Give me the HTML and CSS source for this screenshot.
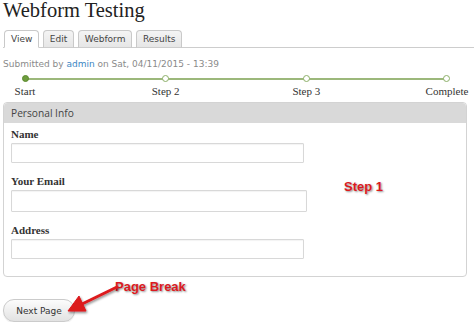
FILE: index.html
```html
<!DOCTYPE html>
<html lang="en">
<head>
    <meta charset="UTF-8">
    <meta name="viewport" content="width=device-width, initial-scale=1.0">
    <title>Webform Testing</title>
    <link rel="stylesheet" href="styles.css">
</head>
<body>
    <div class="page">
        <h1 class="page-title">Webform Testing</h1>

        <ul class="tabs">
            <li class="active"><a href="#">View</a></li>
            <li><a href="#">Edit</a></li>
            <li><a href="#">Webform</a></li>
            <li><a href="#">Results</a></li>
        </ul>

        <div class="submitted">Submitted by <a href="#">admin</a> on Sat, 04/11/2015 - 13:39</div>

        <div class="progress">
            <div class="step done"><span class="dot"></span><span class="step-label">Start</span></div>
            <div class="step"><span class="dot"></span><span class="step-label">Step 2</span></div>
            <div class="step"><span class="dot"></span><span class="step-label">Step 3</span></div>
            <div class="step"><span class="dot"></span><span class="step-label">Complete</span></div>
        </div>

        <form class="webform" onsubmit="event.preventDefault();">
            <fieldset>
                <legend>Personal Info</legend>
                <div class="fields">
                    <label class="form-item">
                        <span>Name</span>
                        <input type="text" name="name" class="short">
                    </label>
                    <label class="form-item">
                        <span>Your Email</span>
                        <input type="text" name="email" class="wide">
                    </label>
                    <label class="form-item">
                        <span>Address</span>
                        <input type="text" name="address" class="short">
                    </label>
                </div>
                <div class="note note-step">Step 1</div>
            </fieldset>

            <div class="actions">
                <input type="submit" value="Next Page" class="button">
                <div class="note note-break">Page Break</div>
                <svg class="arrow" width="130" height="42" viewBox="0 0 130 42">
                    <defs>
                        <filter id="shade" x="-20%" y="-40%" width="150%" height="190%">
                            <feDropShadow dx="1" dy="1.5" stdDeviation="1.2" flood-color="#000" flood-opacity="0.45"/>
                        </filter>
                    </defs>
                    <g filter="url(#shade)" fill="#dc1a1f" stroke="#dc1a1f">
                        <line x1="114" y1="10" x2="79" y2="27" stroke-width="3" stroke-linecap="round"/>
                        <polygon points="65,34 83,34 76,19" stroke-width="1" stroke-linejoin="round"/>
                    </g>
                </svg>
            </div>
        </form>
    </div>
</body>
</html>
```

FILE: styles.css
```css
body {
    margin: 0;
    background: #fff;
    color: #333;
}
.page {
    padding: 0 7px 0 3px;
}
.page-title {
    margin: 0;
    font-family: "Liberation Serif", serif;
    font-weight: normal;
    font-size: 20.5px;
    line-height: 21px;
    color: #222;
}

.tabs {
    display: flex;
    gap: 3.5px;
    list-style: none;
    margin: 9px -7px 0 0;
    padding: 0 0 0 1px;
    border-bottom: 1px solid #cdcdcd;

    & li {
        margin-bottom: -1px;
        border: 1px solid #c9c9c9;
        border-bottom-color: #cdcdcd;
        border-radius: 4px 4px 0 0;
        background: linear-gradient(#f4f4f4, #e6e6e6);
    }
    & li.active {
        background: #fff;
        border-bottom-color: #fff;
    }
    & a {
        display: block;
        padding: 0 6px;
        font-family: "DejaVu Sans", sans-serif;
        font-size: 9px;
        line-height: 16px;
        color: #444;
        text-decoration: none;
    }
}

.submitted {
    margin-top: 11px;
    font-family: "DejaVu Sans", sans-serif;
    font-size: 9px;
    line-height: 11px;
    color: #8a8a8a;
    & a {
        color: #3b86c4;
        text-decoration: none;
    }
}

.progress {
    display: flex;
    justify-content: space-between;
    margin: 5px 20px 0 22px;
    background: linear-gradient(#9cb87b, #9cb87b) 0 2.5px / 100% 2px no-repeat;
}
.step {
    width: 0;
    display: flex;
    flex-direction: column;
    align-items: center;

    & .dot {
        width: 5px;
        height: 5px;
        border: 1px solid #8caf68;
        border-radius: 50%;
        background: #fff;
    }
    & .step-label {
        margin-top: 3px;
        white-space: nowrap;
        font-family: "Liberation Serif", serif;
        font-size: 11px;
        line-height: 12px;
        color: #333;
    }
}
.step.done .dot {
    background: #6e9d3e;
    border-color: #5b8a2d;
}

.webform fieldset {
    position: relative;
    margin: 5px 0 0;
    padding: 0;
    min-width: 0;
    border: 1px solid #d3d3d3;
    border-radius: 4px;
    overflow: hidden;

    & legend {
        float: left;
        width: 100%;
        box-sizing: border-box;
        padding: 0 0 0 7px;
        background: #d9d9d9;
        font-family: "Open Sans", sans-serif;
        font-size: 10.2px;
        line-height: 20px;
        color: #444;
    }
}
.fields {
    clear: both;
    padding: 5px 7px 17px;
    display: flex;
    flex-direction: column;
    gap: 12px;
}
.form-item {
    display: flex;
    flex-direction: column;
    align-items: flex-start;

    & span {
        font-family: "Liberation Serif", serif;
        font-weight: bold;
        font-size: 11px;
        line-height: 12px;
        color: #333;
        margin-bottom: 3px;
    }
    & input {
        box-sizing: border-box;
        margin: 0;
        border: 1px solid #d8d8d8;
        border-radius: 1px;
        box-shadow: inset 0 1px 1px rgba(0, 0, 0, 0.05);
        background: #fff;
    }
    & input.short {
        width: 293px;
        height: 20px;
    }
    & input.wide {
        width: 296px;
        height: 22px;
    }
}

.note {
    position: absolute;
    font-family: "Liberation Sans", sans-serif;
    font-weight: bold;
    font-size: 13px;
    line-height: 15px;
    color: #dc1a1f;
    text-shadow: 1px 1px 2px rgba(0, 0, 0, 0.45);
    white-space: nowrap;
}
.note-step {
    left: 340px;
    top: 76px;
}

.actions {
    position: relative;
    padding-top: 22px;
    height: 23px;
}
.note-break {
    left: 112px;
    top: 2px;
}
.arrow {
    position: absolute;
    left: 0;
    top: 0;
}
.button {
    box-sizing: border-box;
    height: 23px;
    width: 72px;
    padding: 0;
    border: 1px solid #cbcbcb;
    border-radius: 11px;
    background: linear-gradient(#fcfcfc, #e2e2e2);
    box-shadow: 0 1px 1px rgba(0, 0, 0, 0.08);
    font-family: "DejaVu Sans", sans-serif;
    font-size: 9px;
    color: #333;
}
```
